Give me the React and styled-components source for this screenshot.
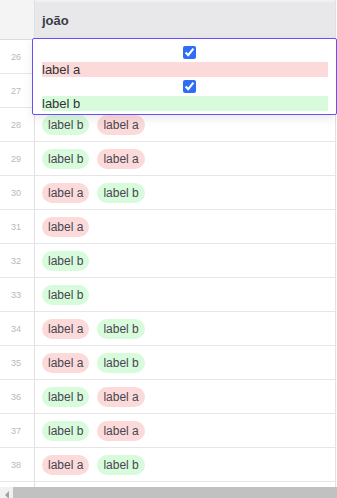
import styled, { createGlobalStyle } from "styled-components"

const GlobalStyle = createGlobalStyle`
  html, body {
    margin: 0;
    padding: 0;
    background: #fff;
  }
  *, *::before, *::after {
    box-sizing: border-box;
  }
  body {
    font-family: "Liberation Sans", Arial, sans-serif;
    color: #333;
  }
`

const rows = [
  { n: 26, labels: ["a", "b"] },
  { n: 27, labels: ["b"] },
  { n: 28, labels: ["b", "a"] },
  { n: 29, labels: ["b", "a"] },
  { n: 30, labels: ["a", "b"] },
  { n: 31, labels: ["a"] },
  { n: 32, labels: ["b"] },
  { n: 33, labels: ["b"] },
  { n: 34, labels: ["a", "b"] },
  { n: 35, labels: ["a", "b"] },
  { n: 36, labels: ["b", "a"] },
  { n: 37, labels: ["b", "a"] },
  { n: 38, labels: ["a", "b"] },
]

const Frame = styled.div`
  position: relative;
  width: 337px;
  height: 498px;
  overflow: hidden;
  display: flex;
  flex-direction: column;
`

const Grid = styled.div`
  flex: 1;
  min-height: 0;
  overflow: hidden;
  width: 336px;
  border-right: 1px solid #e2e2e2;
`

const Row = styled.div`
  display: grid;
  grid-template-columns: 35px 1fr;
  height: ${({ head }) => (head ? "40px" : "34px")};
  border-bottom: 1px solid ${({ head }) => (head ? "#dcdcdf" : "#e6e6e6")};
`

const NumCell = styled.div`
  border-right: 1px solid #e0e0e0;
  background: ${({ head }) => (head ? "#f4f4f5" : "#fff")};
  display: flex;
  align-items: center;
  justify-content: center;
  font-size: 9px;
  color: #b8b8bd;
  padding-right: 2px;
`

const HeadCell = styled.div`
  background: #e8e8eb;
  border-top: 2px solid #f1f1f3;
  display: flex;
  align-items: center;
  padding-left: 7px;
  font-size: 13px;
  font-weight: bold;
  color: #3b3b46;
`

const Cell = styled.div`
  display: flex;
  align-items: center;
  gap: 8px;
  padding-left: 7px;
`

const Pill = styled.span`
  display: inline-flex;
  align-items: center;
  height: 20px;
  padding: 0 6px;
  border-radius: 10px;
  font-size: 12px;
  color: #474752;
  background: ${({ kind }) => (kind === "a" ? "#fddada" : "#d8fbdc")};
`

const Popup = styled.div`
  position: absolute;
  top: 38px;
  left: 32px;
  width: 305px;
  background: #fff;
  border: 1px solid #6a4dfc;
  border-radius: 2px;
  padding: 4px 8px 3px 9px;
  box-shadow: 0 4px 10px rgba(0, 0, 0, 0.08);
`

const Option = styled.div`
  display: flex;
  flex-direction: column;
  align-items: center;
`

const Check = styled.input`
  width: 13px;
  height: 13px;
  margin: 3px 0 3px 9px;
  accent-color: #2f6df6;
`

const OptionLabel = styled.div`
  align-self: stretch;
  height: 15px;
  line-height: 15px;
  font-size: 13px;
  color: #333;
  background: ${({ kind }) => (kind === "a" ? "#fddada" : "#d8fbdc")};
`

const Scrollbar = styled.div`
  height: 11px;
  flex-shrink: 0;
  background: #f1f1f1;
  display: flex;
  align-items: flex-start;
`

const Arrow = styled.div`
  width: 13px;
  display: flex;
  justify-content: center;
  padding-top: 4px;
  &::before {
    content: "";
    border-top: 4px solid transparent;
    border-bottom: 4px solid transparent;
    border-right: 4px solid #a3a3a3;
  }
`

const Thumb = styled.div`
  flex: 1;
  height: 11px;
  background: #c1c1c1;
`

function App() {
  return (
    <>
      <GlobalStyle />
      <Frame>
        <Grid>
          <Row head>
            <NumCell head />
            <HeadCell>joão</HeadCell>
          </Row>
          {rows.map((row) => (
            <Row key={row.n}>
              <NumCell>{row.n}</NumCell>
              <Cell>
                {row.labels.map((l) => (
                  <Pill key={l} kind={l}>
                    label {l}
                  </Pill>
                ))}
              </Cell>
            </Row>
          ))}
          <Row>
            <NumCell />
            <Cell />
          </Row>
        </Grid>
        <Scrollbar>
          <Arrow />
          <Thumb />
        </Scrollbar>
        <Popup>
          <Option>
            <Check type="checkbox" defaultChecked />
            <OptionLabel kind="a">label a</OptionLabel>
          </Option>
          <Option>
            <Check type="checkbox" defaultChecked />
            <OptionLabel kind="b">label b</OptionLabel>
          </Option>
        </Popup>
      </Frame>
    </>
  )
}

export default App
